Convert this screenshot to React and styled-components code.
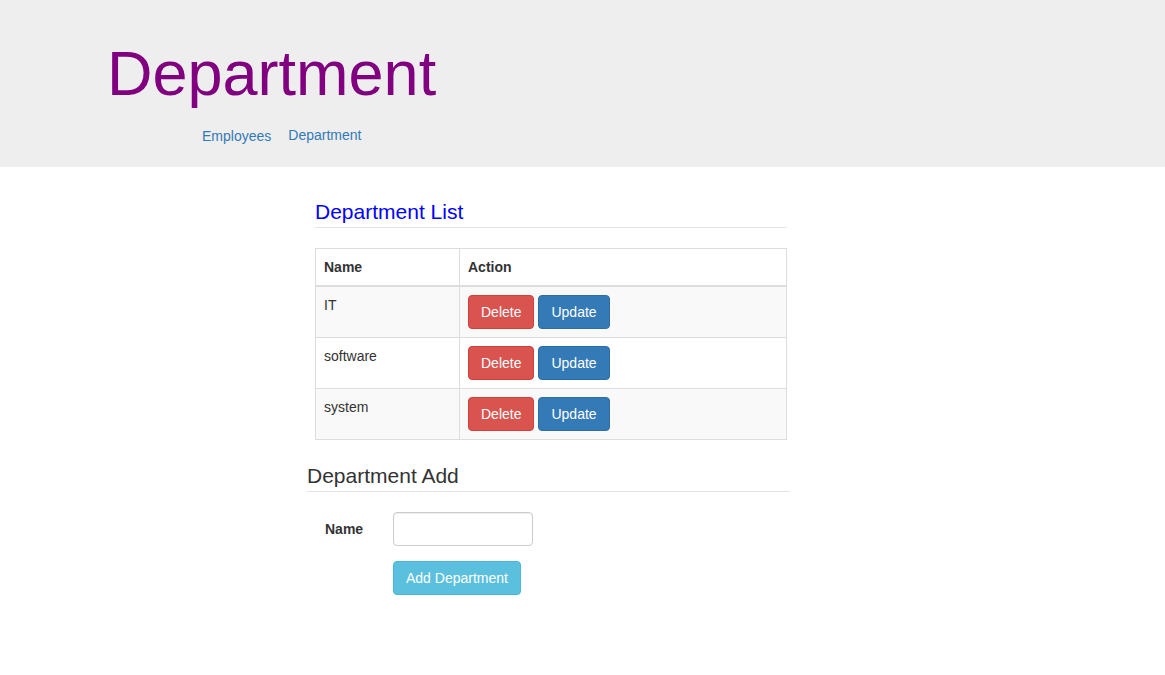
import React from 'react';
import styled, { createGlobalStyle } from 'styled-components';

const GlobalStyle = createGlobalStyle`
    html, body {
        margin: 0;
        padding: 0;
        background: #fff;
    }
    body {
        font-family: "Liberation Sans", Arial, Helvetica, sans-serif;
        font-size: 14px;
        line-height: 1.42857;
        color: #333;
    }
    * {
        box-sizing: border-box;
    }
`;

const Jumbotron = styled.div`
    height: 167px;
    padding-top: 39px;
    background-color: #eee;
`;

const Title = styled.h1`
    margin: 0;
    padding-left: 107px;
    font-size: 63px;
    font-weight: 400;
    line-height: 1.1;
    color: #800080;
`;

const Nav = styled.nav`
    display: flex;
    gap: 17px;
    margin-top: 18px;
    padding-left: 202px;
`;

const NavLink = styled.a`
    color: #337ab7;
    text-decoration: none;
    padding-top: ${({ drop }) => drop || 0}px;
`;

const Section = styled.section`
    margin-left: ${({ left }) => left}px;
    width: ${({ width }) => width}px;
    margin-top: ${({ top }) => top}px;
`;

const Heading = styled.h3`
    margin: 0;
    padding-bottom: 4px;
    font-size: 21px;
    font-weight: 400;
    line-height: 1.1;
    color: ${({ color }) => color};
    border-bottom: 1px solid #e5e5e5;
`;

const Table = styled.table`
    width: 100%;
    margin-top: 20px;
    border-collapse: collapse;
    border-spacing: 0;
    border: 1px solid #ddd;
`;

const Th = styled.th`
    width: ${({ w }) => (w ? `${w}px` : 'auto')};
    padding: 9px 8px 7px;
    text-align: left;
    vertical-align: bottom;
    font-weight: 700;
    border: 1px solid #ddd;
    border-bottom-width: 2px;
`;

const Row = styled.tr`
    background-color: ${({ striped }) => (striped ? '#f9f9f9' : '#fff')};
`;

const Td = styled.td`
    padding: 8px;
    vertical-align: top;
    border: 1px solid #ddd;
`;

const CellText = styled.div`
    padding-top: 1px;
`;

const Actions = styled.div`
    display: flex;
    gap: 4px;
`;

const Button = styled.button`
    display: inline-block;
    height: 34px;
    padding: 7px 12px 5px;
    font-family: inherit;
    font-size: 14px;
    line-height: 1.42857;
    color: #fff;
    background-color: ${({ bg }) => bg};
    border: 1px solid ${({ bd }) => bd};
    border-radius: 4px;
    cursor: pointer;
`;

const Form = styled.form`
    display: grid;
    grid-template-columns: 68px 140px;
    row-gap: 15px;
    align-items: center;
    margin-top: 20px;
    padding-left: 18px;
`;

const Label = styled.label`
    font-weight: 700;
    padding-top: 2px;
`;

const Input = styled.input`
    height: 34px;
    width: 140px;
    padding: 6px 12px;
    font-family: inherit;
    font-size: 14px;
    border: 1px solid #ccc;
    border-radius: 4px;
    box-shadow: inset 0 1px 1px rgba(0, 0, 0, 0.075);
`;

const SubmitCell = styled.div`
    grid-column: 2 / 4;
`;

const departments = [
    { id: 1, name: 'IT' },
    { id: 2, name: 'software' },
    { id: 3, name: 'system' },
];

const App = () => (
    <>
        <GlobalStyle />
        <Jumbotron>
            <Title>Department</Title>
            <Nav>
                <NavLink href="#" drop={1}>Employees</NavLink>
                <NavLink href="#">Department</NavLink>
            </Nav>
        </Jumbotron>
        <Section left={315} width={472} top={33}>
            <Heading color="#0000ff">Department List</Heading>
            <Table>
                <thead>
                    <tr>
                        <Th w={144}>Name</Th>
                        <Th>Action</Th>
                    </tr>
                </thead>
                <tbody>
                    {departments.map(({ id, name }, idx) => (
                        <Row key={id} striped={idx % 2 === 0}>
                            <Td><CellText>{name}</CellText></Td>
                            <Td>
                                <Actions>
                                    <Button type="button" bg="#d9534f" bd="#d43f3a">Delete</Button>
                                    <Button type="button" bg="#337ab7" bd="#2e6da4">Update</Button>
                                </Actions>
                            </Td>
                        </Row>
                    ))}
                </tbody>
            </Table>
        </Section>
        <Section left={307} width={483} top={24}>
            <Heading color="#333">Department Add</Heading>
            <Form onSubmit={(e) => e.preventDefault()}>
                <Label htmlFor="dept-name">Name</Label>
                <Input id="dept-name" type="text" />
                <span />
                <SubmitCell>
                    <Button type="submit" bg="#5bc0de" bd="#46b8da">Add Department</Button>
                </SubmitCell>
            </Form>
        </Section>
    </>
);

export default App;
